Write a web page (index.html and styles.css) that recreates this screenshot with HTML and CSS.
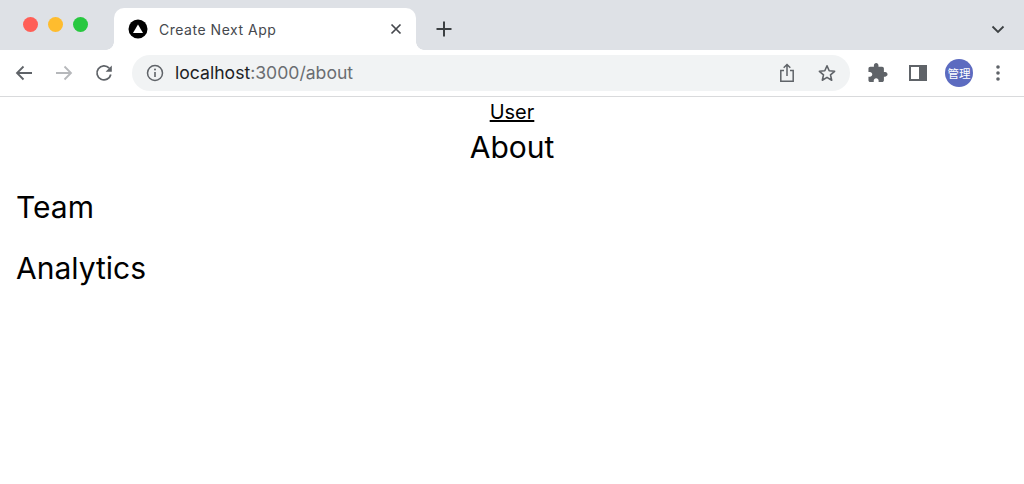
FILE: index.html
```html
<!DOCTYPE html>
<html lang="en">
<head>
<meta charset="utf-8">
<title>Create Next App</title>
<link rel="stylesheet" href="styles.css">
</head>
<body>
<header class="chrome">
  <div class="tabstrip">
    <div class="traffic">
      <span class="light red"></span>
      <span class="light yellow"></span>
      <span class="light green"></span>
    </div>
    <div class="tab">
      <svg class="favicon" width="20" height="20" viewBox="0 0 20 20"><circle cx="10" cy="10" r="9.500" fill="#000"/><path d="M10 5.600 15 14H5z" fill="#fff"/></svg>
      <span class="tab-title">Create Next App</span>
      <svg class="tab-close" width="12" height="12" viewBox="0 0 12 12"><path d="M1.500 1.500l9 9M10.500 1.500l-9 9" stroke="#45484d" stroke-width="1.700" fill="none"/></svg>
    </div>
    <svg class="new-tab" width="16" height="16" viewBox="0 0 16 16"><path d="M8 .5v15M.5 8h15" stroke="#3c4043" stroke-width="2" fill="none"/></svg>
    <svg class="tab-menu" width="14" height="9" viewBox="0 0 14 9"><path d="M1.500 1.500 7 7l5.500-5.500" stroke="#3c4043" stroke-width="1.800" fill="none"/></svg>
  </div>
  <div class="toolbar">
    <svg class="nav" width="20" height="20" viewBox="0 0 20 20"><path d="M18 10H3M9.500 3.500 3 10l6.500 6.500" stroke="#5f6368" stroke-width="1.800" fill="none"/></svg>
    <svg class="nav" width="20" height="20" viewBox="0 0 20 20"><path d="M2 10h15M10.500 3.500 17 10l-6.500 6.500" stroke="#b6b8bb" stroke-width="1.800" fill="none"/></svg>
    <svg class="nav" width="20" height="20" viewBox="0 0 20 20"><path d="M16.800 11.500a7 7 0 1 1-1.600-6.300" stroke="#5f6368" stroke-width="1.800" fill="none"/><path d="M17.800 2.500v6.200h-6.200z" fill="#5f6368"/></svg>
    <div class="omnibox">
      <svg class="info" width="18" height="18" viewBox="0 0 18 18"><circle cx="9" cy="9" r="7.500" stroke="#5f6368" stroke-width="1.500" fill="none"/><path d="M9 8v5" stroke="#5f6368" stroke-width="1.600"/><circle cx="9" cy="5.500" r="1" fill="#5f6368"/></svg>
      <span class="url"><span class="host">localhost</span>:3000/about</span>
      <svg class="share" width="16" height="20" viewBox="0 0 16 20"><path d="M5 7.500H1.800v10.700h12.400V7.500H11M8 13V1.800M4.700 4.800 8 1.500l3.300 3.300" stroke="#5f6368" stroke-width="1.500" fill="none"/></svg>
      <svg class="star" width="20" height="20" viewBox="0 0 20 20"><path d="M10 2.800l2.200 5 5.400.5-4.100 3.600 1.200 5.300-4.700-2.800-4.700 2.800 1.200-5.300-4.100-3.600 5.400-.5z" stroke="#5f6368" stroke-width="1.600" fill="none" stroke-linejoin="round"/></svg>
    </div>
    <svg class="puzzle" width="20" height="20" viewBox="1.500 1 22 22"><path d="M20.500 11H19V7c0-1.100-.9-2-2-2h-4V3.500C13 2.120 11.880 1 10.500 1S8 2.120 8 3.500V5H4c-1.100 0-1.990.9-1.990 2v3.800H3.500c1.490 0 2.700 1.210 2.700 2.700s-1.210 2.700-2.700 2.700H2V20c0 1.100.9 2 2 2h3.800v-1.500c0-1.490 1.210-2.700 2.700-2.700 1.490 0 2.700 1.210 2.700 2.700V22H17c1.100 0 2-.9 2-2v-4h1.500c1.380 0 2.500-1.120 2.500-2.500S21.880 11 20.500 11z" fill="#5f6368"/></svg>
    <svg class="sidepanel" width="18" height="16" viewBox="0 0 18 16"><path d="M0 0h18v16H0z" fill="#5f6368"/><path d="M2 2h8v12H2z" fill="#fff"/></svg>
    <div class="avatar">管理</div>
    <svg class="dots" width="4" height="16" viewBox="0 0 4 16"><circle cx="2" cy="2" r="1.800" fill="#5f6368"/><circle cx="2" cy="8" r="1.800" fill="#5f6368"/><circle cx="2" cy="14" r="1.800" fill="#5f6368"/></svg>
  </div>
</header>
<main class="page">
  <a class="user-link" href="#">User</a>
  <p class="heading centered">About</p>
  <p class="heading item">Team</p>
  <p class="heading item">Analytics</p>
</main>
</body>
</html>
```

FILE: styles.css
```css
* { box-sizing: border-box; }
html, body { margin: 0; padding: 0; height: 100%; overflow: hidden; background: #fff; }
body { font-family: Inter, "Noto Sans", sans-serif; color: #000; }

.chrome { display: flex; flex-direction: column; }
.tabstrip {
  height: 50px;
  background: #dee1e6;
  display: flex;
  align-items: flex-end;
  padding-left: 23px;
}
.traffic { display: flex; gap: 10px; align-self: flex-start; padding-top: 17px; width: 91px; }
.light { width: 15px; height: 15px; border-radius: 50%; }
.red { background: #ff5f57; }
.yellow { background: #febc2e; }
.green { background: #28c840; }

.tab {
  position: relative;
  width: 302px;
  height: 42px;
  background: #fff;
  border-radius: 10px 10px 0 0;
  display: flex;
  align-items: center;
  padding: 0 14px 0 15px;
}
.tab::before,
.tab::after {
  content: "";
  position: absolute;
  bottom: 0;
  width: 8px;
  height: 8px;
  background: radial-gradient(circle at var(--cx) 0, #dee1e6 7.500px, #fff 8px);
}
.tab::before { left: -8px; --cx: 0; }
.tab::after { right: -8px; --cx: 100%; }
.favicon { margin-left: -1px; }
.tab-title { flex: 1; margin-left: 11px; font-size: 14px; color: #45484d; letter-spacing: .52px; }
.new-tab { margin: 0 0 13px 20px; }
.tab-menu { margin: 0 19px 16px auto; }

.toolbar {
  height: 47px;
  background: #fff;
  border-bottom: 1px solid #d9dadc;
  display: flex;
  align-items: center;
  padding: 0 0 1px 14px;
}
.nav { margin-right: 20px; }
.nav:nth-child(3) { margin-right: 18px; }
.omnibox {
  width: 718px;
  height: 36px;
  border-radius: 18px;
  background: #f1f3f4;
  display: flex;
  align-items: center;
  padding: 0 13px 0 14px;
}
.url { flex: 1; margin-left: 11px; font-size: 17.600px; color: #6a6d71; white-space: nowrap; }
.host { color: #202124; }
.share { margin-right: 22px; }
.puzzle { margin-left: 18px; }
.sidepanel { margin-left: 21px; }
.avatar {
  width: 28px;
  height: 28px;
  margin-left: 18px;
  margin-right: -1px;
  border-radius: 50%;
  background: #5c6bc0;
  color: #fff;
  font: 11.500px/28px "Noto Sans CJK SC", sans-serif;
  text-align: center;
}
.dots { margin-left: 24px; }

.page { text-align: left; }
.user-link {
  display: block;
  text-align: center;
  height: 31px;
  font-size: 20px;
  line-height: 30px;
  color: #000;
  text-decoration: underline;
}
.heading { margin: 0; font-size: 30px; line-height: 39px; }
.centered { text-align: center; line-height: 38px; }
.item { margin-top: 22px; padding-left: 16px; }
```
